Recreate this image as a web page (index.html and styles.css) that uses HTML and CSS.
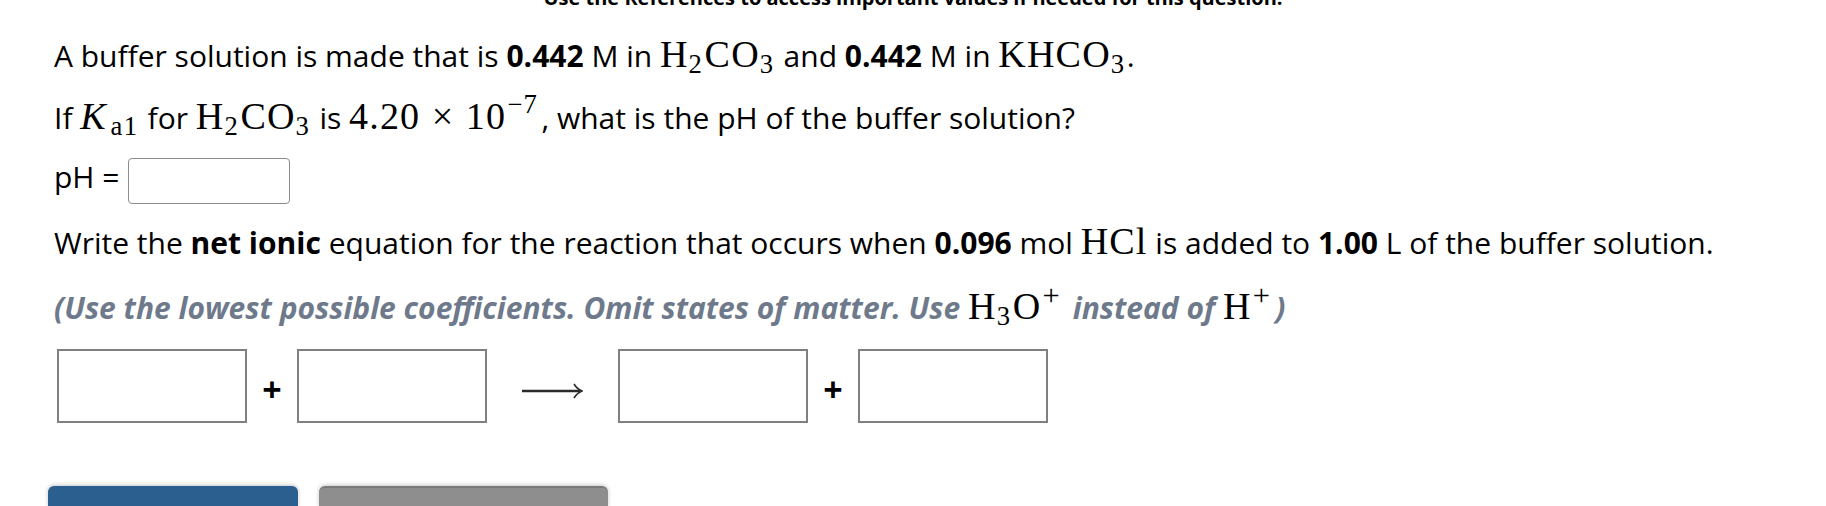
FILE: index.html
```html
<!DOCTYPE html>
<html>
<head>
<meta charset="utf-8">
<link rel="stylesheet" href="styles.css">
</head>
<body>
<div class="note">Use the References to access important values if needed for this question.</div>
<div class="question">
  <p class="line l1">A buffer solution is made that is <b>0.442</b> M in <span class="m">H<sub>2</sub>CO<sub>3</sub></span> and <b>0.442</b> M in <span class="m">KHCO<sub>3</sub></span>.</p>
  <p class="line l2">If <span class="m"><i>K</i><sub>a1</sub></span> for <span class="m">H<sub>2</sub>CO<sub>3</sub></span> is <span class="m">4.20<span class="op">×</span>10<sup>−7</sup></span>, what is the pH of the buffer solution?</p>
  <div class="ph-row"><span class="ph-label">pH =</span><span class="ph-box"></span></div>
  <p class="line l3">Write the <b>net ionic</b> equation for the reaction that occurs when <b>0.096</b> mol <span class="m">HCl</span> is added to <b>1.00</b> L of the buffer solution.</p>
  <p class="line hint">(Use the lowest possible coefficients. Omit states of matter. Use <span class="m">H<sub>3</sub>O<sup class="plus-sup">+</sup></span> instead of <span class="m">H<sup class="plus-sup">+</sup></span>)</p>
  <div class="eq-row">
    <span class="eq-box"></span>
    <span class="plus">+</span>
    <span class="eq-box"></span>
    <svg class="arrow" width="61" height="16" viewBox="0 0 61 16"><path d="M0 8 H58" stroke="#2a2a2a" stroke-width="2.4" fill="none"/><path d="M52 1 Q55 6 60 8 Q55 10 52 15" stroke="#2a2a2a" stroke-width="1.6" fill="none"/></svg>
    <span class="eq-box"></span>
    <span class="plus">+</span>
    <span class="eq-box"></span>
  </div>
  <div class="buttons">
    <span class="btn btn-blue"></span>
    <span class="btn btn-gray"></span>
  </div>
</div>
</body>
</html>
```
FILE: styles.css
```css
html, body {
  margin: 0;
  padding: 0;
  background: #fff;
  overflow: hidden;
}
body {
  font-family: "Open Sans", "Liberation Sans", sans-serif;
  font-size: 30px;
  color: #000;
  width: 1826px;
  height: 506px;
}
.note {
  font-weight: 700;
  text-align: center;
  font-size: 20px;
  line-height: 28px;
  margin-top: -16px;
  height: 28px;
}
.question {
  padding-left: 54px;
}
.line {
  margin: 0;
  white-space: nowrap;
  line-height: 40px;
}
b { font-weight: 700; }
.m {
  font-family: "Liberation Serif", serif;
  font-size: 1.27em;
  letter-spacing: 0.03em;
  font-style: normal;
  font-weight: 400;
  line-height: 1;
  color: #000;
}
.m i { font-style: italic; margin-right: 0.1em; }
.m .op { margin: 0 0.3em; }
.m sub, .m sup {
  font-size: 0.7em;
  line-height: 0;
  letter-spacing: 0.05em;
}
.m sub { vertical-align: -0.22em; margin-right: 0.05em; }
.m sup { vertical-align: 0.6em; margin-left: 0.04em; margin-right: 0.12em; }
.m sup.plus-sup { font-size: 0.8em; vertical-align: 0.45em; }
.l1 { margin-top: 23px; }
.l2 { margin-top: 21px; }
.ph-row {
  display: flex;
  align-items: center;
  gap: 9px;
  margin-top: 19px;
  height: 47px;
}
.ph-label {
  line-height: 40px;
  padding-bottom: 8px;
}
.ph-box {
  display: block;
  width: 160px;
  height: 44px;
  border: 1.5px solid #8c8c8c;
  border-radius: 4px;
}
.l3 { margin-top: 18px; }
.hint {
  margin-top: 24px;
  color: #6e7a8b;
  font-style: italic;
  font-weight: 700;
}
.eq-row {
  display: flex;
  align-items: center;
  margin-top: 21px;
  padding-left: 3px;
}
.eq-box {
  display: block;
  width: 186px;
  height: 70px;
  border: 2px solid #808080;
}
.plus {
  font-weight: 700;
  font-size: 34px;
  width: 50px;
  text-align: center;
  line-height: 1;
  margin-top: 6px;
}
.arrow {
  margin: 10px 35px 0;
}
.buttons {
  display: flex;
  gap: 21px;
  margin-top: 63px;
  margin-left: -6px;
}
.btn {
  display: block;
  height: 22px;
  border-radius: 6px 6px 0 0;
  box-shadow: 0 -1px 4px rgba(0,0,0,0.22);
}
.btn-blue {
  width: 250px;
  background: #2a5f8f;
}
.btn-gray {
  width: 289px;
  height: 20px;
  background: #8e8e8e;
  border-top: 2px solid #7a7a7a;
}
```
